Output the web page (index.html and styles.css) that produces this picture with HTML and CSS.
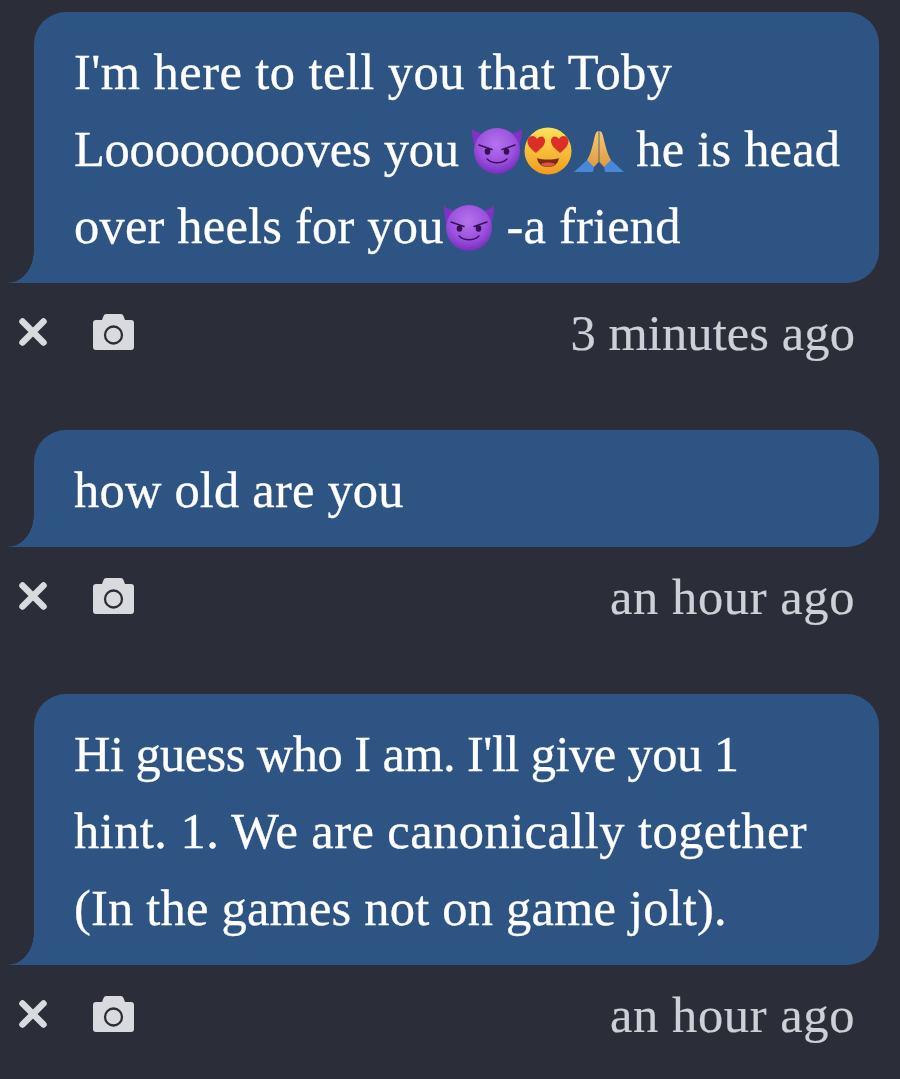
FILE: index.html
```html
<!DOCTYPE html>
<html lang="en">
<head>
    <meta charset="UTF-8">
    <meta name="viewport" content="width=device-width, initial-scale=1.0">
    <title>Messages</title>
    <link rel="stylesheet" href="styles.css">
</head>
<body>
    <svg class="defs" width="0" height="0" aria-hidden="true">
        <defs>
            <radialGradient id="purple" cx="48%" cy="35%" r="70%">
                <stop offset="0" stop-color="#b474ee"/>
                <stop offset="0.6" stop-color="#9a50dc"/>
                <stop offset="1" stop-color="#6f27b4"/>
            </radialGradient>
            <linearGradient id="yellow" x1="0" y1="0" x2="0" y2="1">
                <stop offset="0" stop-color="#fde25a"/>
                <stop offset="1" stop-color="#f29a1c"/>
            </linearGradient>
            <linearGradient id="skin" x1="0" y1="0" x2="0" y2="1">
                <stop offset="0" stop-color="#f5c878"/>
                <stop offset="1" stop-color="#e09a3c"/>
            </linearGradient>
            <symbol id="devil" viewBox="0 0 50 46">
                <path d="M0 1 C4 4 9 5 14 8 L5 24 C1 17 0 8 0 1Z M50 1 C46 4 41 5 36 8 L45 24 C49 17 50 8 50 1Z" fill="#7f33c2"/>
                <circle cx="25" cy="23" r="23" fill="url(#purple)"/>
                <path d="M7 17 L20 21.5 M43 17 L30 21.500" stroke="#3a1160" stroke-width="1.500" stroke-linecap="round"/>
                <ellipse cx="15.500" cy="23.500" rx="2.800" ry="3.200" fill="#35104f"/>
                <ellipse cx="34.500" cy="23.500" rx="2.800" ry="3.200" fill="#35104f"/>
                <path d="M15 31 C20 36 30 36 35 31" fill="none" stroke="#3a1160" stroke-width="1.400" stroke-linecap="round"/>
            </symbol>
            <symbol id="hearts" viewBox="0 0 48 48">
                <circle cx="24" cy="24" r="23.500" fill="url(#yellow)"/>
                <path d="M12 26 C6 21 2 17 4 12 C6 8 11 8 13 12 C16 8 21 9 21 14 C21 19 16 22 12 26Z" fill="#dc2f2a"/>
                <path d="M36 26 C42 21 46 17 44 12 C42 8 37 8 35 12 C32 8 27 9 27 14 C27 19 32 22 36 26Z" fill="#dc2f2a"/>
                <path d="M13 31 C18 33 30 33 35 31 C34 37 30 40 24 40 C18 40 14 37 13 31Z" fill="#7a2a16"/>
                <path d="M17 37 C20 35 28 35 31 37 C28 40.500 20 40.500 17 37Z" fill="#e2504a"/>
            </symbol>
            <symbol id="pray" viewBox="0 0 50 44">
                <path d="M0 42 L13 30 L20 36 L19 42Z M50 42 L37 30 L30 36 L31 42Z" fill="#4a87d8"/>
                <path d="M24.600 1 C21.500 1 21 6 19 14 C17 22 15 27 13 30 L20 37 L24.600 32Z" fill="url(#skin)"/>
                <path d="M25.400 1 C28.500 1 29 6 31 14 C33 22 35 27 37 30 L30 37 L25.400 32Z" fill="url(#skin)"/>
            </symbol>
            <symbol id="close" viewBox="0 0 28 28">
                <path d="M3.500 3.500 L24.500 24.500 M24.500 3.500 L3.500 24.500" stroke="#d9dade" stroke-width="6.500" stroke-linecap="round"/>
            </symbol>
            <symbol id="camera" viewBox="0 0 41 36">
                <path d="M3 6 H9 L10.500 2 Q11 0 13.500 0 H27.500 Q30 0 30.500 2 L32 6 H38 Q41 6 41 9 V33 Q41 36 38 36 H3 Q0 36 0 33 V9 Q0 6 3 6Z" fill="#d9dade"/>
                <circle cx="20.500" cy="21" r="8.500" fill="none" stroke="#2b2e39" stroke-width="2.300"/>
            </symbol>
        </defs>
    </svg>

    <div class="message">
        <div class="bubble">
            <span class="wide">I'm here to tell you that Toby</span><br>
            <span class="snug">Looooooooves you</span> <svg class="emoji devil"><use href="#devil"/></svg><svg class="emoji face"><use href="#hearts"/></svg><svg class="emoji pray"><use href="#pray"/></svg> he is head<br>
            over heels for you<svg class="emoji devil"><use href="#devil"/></svg> -a friend
        </div>
        <div class="meta">
            <svg class="icon-close"><use href="#close"/></svg>
            <svg class="icon-camera"><use href="#camera"/></svg>
            <span class="time">3 minutes ago</span>
        </div>
    </div>

    <div class="message">
        <div class="bubble">how old are you</div>
        <div class="meta">
            <svg class="icon-close"><use href="#close"/></svg>
            <svg class="icon-camera"><use href="#camera"/></svg>
            <span class="time spaced">an hour ago</span>
        </div>
    </div>

    <div class="message">
        <div class="bubble">
            <span class="tight">Hi guess who I am. I'll give you 1</span><br>
            <span class="wide">hint. 1. We are canonically together</span><br>
            (In the games not on game jolt).
        </div>
        <div class="meta">
            <svg class="icon-close"><use href="#close"/></svg>
            <svg class="icon-camera"><use href="#camera"/></svg>
            <span class="time spaced">an hour ago</span>
        </div>
    </div>
</body>
</html>
```

FILE: styles.css
```css
html {
    background-color: #2b2e39;
}
body {
    margin: 0;
    padding: 12px 21px 0 34px;
    height: 1079px;
    box-sizing: border-box;
    overflow: hidden;
    background-color: #2b2e39;
    font-family: "Liberation Serif", serif;
}
.defs {
    display: block;
    height: 0;
}
.message {
    margin-bottom: 46px;
}
.bubble {
    position: relative;
    padding: 22px 20px 18px 40px;
    background-color: #2d5482;
    border-radius: 32px 32px 32px 0;
    color: #fff;
    font-size: 50.5px;
    letter-spacing: 0.2px;
    line-height: 77px;
    white-space: nowrap;
    -webkit-text-stroke: 0.3px #fff;
}
/* the serif we have runs a bit uneven against the original, so nudge per line */
.wide {
    letter-spacing: 0.44px;
}
.snug {
    letter-spacing: -0.24px;
}
.tight {
    letter-spacing: -0.57px;
}
/* little tail in the bottom left corner */
.bubble::before {
    content: "";
    position: absolute;
    left: -26px;
    bottom: 0;
    width: 26px;
    height: 32px;
    background: radial-gradient(ellipse 26px 32px at 0 0, transparent 98%, #2d5482 100%);
}
.emoji {
    vertical-align: -8px;
}
.devil {
    width: 50px;
    height: 46px;
}
.face {
    width: 48px;
    height: 48px;
    margin-left: 2px;
    vertical-align: -9px;
}
.pray {
    width: 50px;
    height: 44px;
    margin-left: 2px;
}
.meta {
    display: flex;
    align-items: center;
    height: 101px;
    margin-left: -15px;
    padding-bottom: 3px;
    box-sizing: border-box;
}
.icon-close {
    width: 28px;
    height: 28px;
}
.icon-camera {
    width: 41px;
    height: 36px;
    margin-left: 46px;
}
.time {
    margin-left: auto;
    margin-right: 24px;
    padding-top: 1px;
    color: #cfd0d6;
    font-size: 50.5px;
    letter-spacing: 0.1px;
    -webkit-text-stroke: 0.2px #cfd0d6;
}
.spaced {
    letter-spacing: 0.6px;
}
```
